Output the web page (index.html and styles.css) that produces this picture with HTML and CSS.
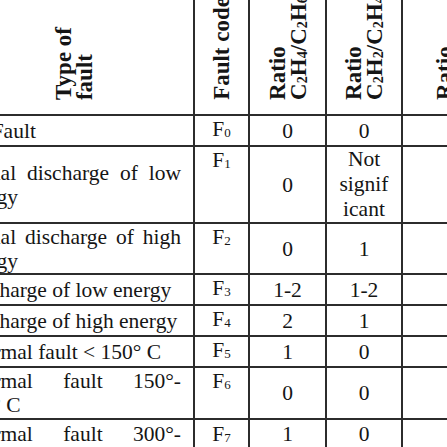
FILE: index.html
```html
<!DOCTYPE html>
<html lang="en">
<head>
<meta charset="utf-8">
<title>Fault codes</title>
<link rel="stylesheet" href="styles.css">
</head>
<body>
<div class="page">
<table class="faults">
<colgroup>
<col class="c-type"><col class="c-code"><col class="c-r1"><col class="c-r2"><col class="c-r3">
</colgroup>
<thead>
<tr class="head">
<th class="th-type"><div class="vt">Type of<br>fault</div></th>
<th><div class="vt">Fault code</div></th>
<th class="th-ratio"><div class="vt">Ratio<br>C<sub>2</sub>H<sub>4</sub>/C<sub>2</sub>H<sub>6</sub></div></th>
<th class="th-ratio"><div class="vt">Ratio<br>C<sub>2</sub>H<sub>2</sub>/C<sub>2</sub>H<sub>4</sub></div></th>
<th class="th-ratio"><div class="vt">Ratio<br>CH<sub>4</sub>/H<sub>2</sub></div></th>
</tr>
</thead>
<tbody>
<tr class="r31">
<td class="type">No Fault</td><td class="code">F<sub>0</sub></td><td>0</td><td>0</td><td>0</td>
</tr>
<tr class="r77">
<td class="type">Partial discharge of low energy</td><td class="code">F<sub>1</sub></td><td>0</td><td class="tall">Not signif<wbr>icant</td><td>1</td>
</tr>
<tr class="r51">
<td class="type">Partial discharge of high energy</td><td class="code">F<sub>2</sub></td><td>0</td><td>1</td><td>1</td>
</tr>
<tr class="r31">
<td class="type">Discharge of low energy</td><td class="code">F<sub>3</sub></td><td>1-2</td><td>1-2</td><td>0</td>
</tr>
<tr class="r31">
<td class="type">Discharge of high energy</td><td class="code">F<sub>4</sub></td><td>2</td><td>1</td><td>0</td>
</tr>
<tr class="r31">
<td class="type">Thermal fault &lt; 150° C</td><td class="code">F<sub>5</sub></td><td>1</td><td>0</td><td>0</td>
</tr>
<tr class="r52">
<td class="type"><span class="jl">Thermal fault 150°-</span>300° C</td><td class="code">F<sub>6</sub></td><td>0</td><td>0</td><td>2</td>
</tr>
<tr class="r52 top">
<td class="type"><span class="jl">Thermal fault 300°-</span>700° C</td><td class="code">F<sub>7</sub></td><td>1</td><td>0</td><td>2</td>
</tr>
<tr class="r31">
<td class="type">Thermal fault &gt; 700° C</td><td class="code">F<sub>8</sub></td><td>2</td><td>0</td><td>2</td>
</tr>
</tbody>
</table>
</div>
</body>
</html>
```
FILE: styles.css
```css
html, body {
  margin: 0;
  padding: 0;
  background: #ffffff;
  overflow: hidden;
}

.page {
  width: 447px;
  height: 447px;
  overflow: hidden;
}

.faults {
  margin-left: -47px;
  margin-top: -36px;
  border-collapse: collapse;
  table-layout: fixed;
  width: 554px;
  font-family: "Liberation Serif", "Times New Roman", serif;
  color: #151515;
}

.c-type { width: 240px; }
.c-code { width: 55px; }
.c-r1 { width: 77px; }
.c-r2 { width: 76px; }
.c-r3 { width: 106px; }

.faults th,
.faults td {
  border: 2px solid #2c2c2c;
}

.head { height: 150px; }

.faults th {
  vertical-align: bottom;
  text-align: center;
  padding: 0 0 10px 0;
  font-weight: bold;
}

.th-ratio { padding-left: 6px; }

.vt {
  display: inline-block;
  writing-mode: vertical-rl;
  transform: rotate(180deg);
  text-align: left;
  font-size: 23px;
  line-height: 21px;
  white-space: nowrap;
}

.vt sub {
  font-size: 0.62em;
  vertical-align: -0.22em;
  line-height: 0;
}

.faults td {
  font-size: 21.5px;
  line-height: 24px;
  padding: 0 5px;
  text-align: center;
  vertical-align: middle;
}

.faults td.type {
  text-align: justify;
  padding: 0 12px 0 5px;
}

.jl {
  display: block;
  text-align: justify;
  text-align-last: justify;
}

.faults td.code {
  vertical-align: top;
  padding-top: 1px;
}

.faults td.code sub {
  font-size: 13px;
  vertical-align: -1px;
  line-height: 0;
}

.faults td.tall { line-height: 25px; }

.faults .top td {
  vertical-align: top;
  padding-top: 2px;
}

.r31 { height: 31px; }
.r51 { height: 51px; }
.r52 { height: 52px; }
.r77 { height: 77px; }
```
